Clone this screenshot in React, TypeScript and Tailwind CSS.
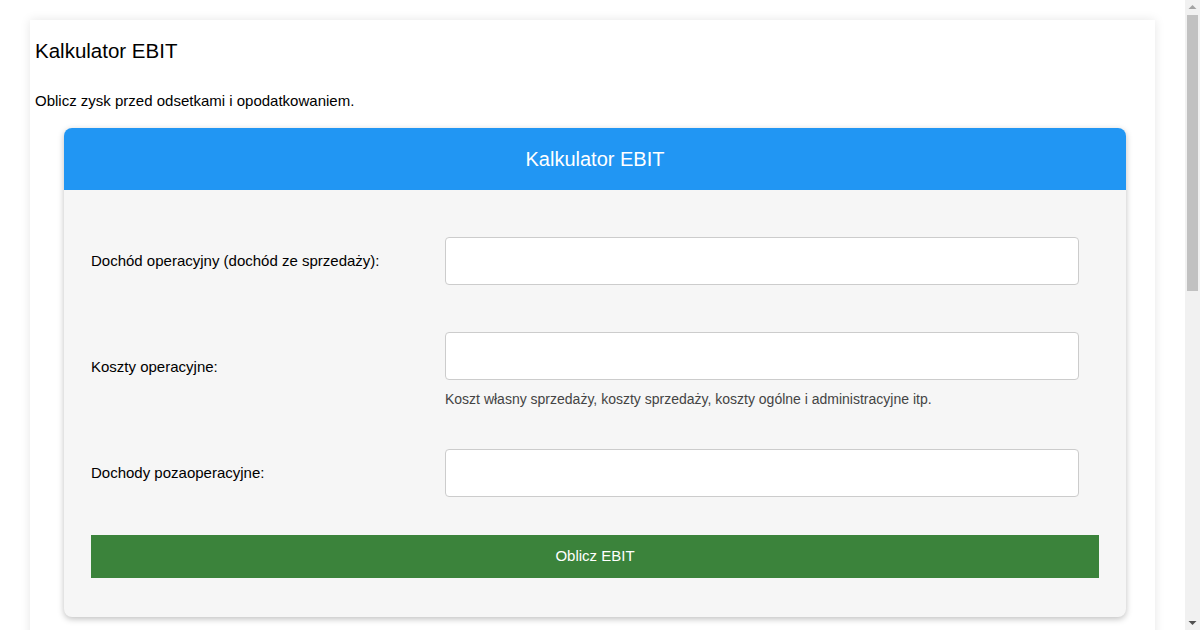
const FIELDS = [
  { label: "Dochód operacyjny (dochód ze sprzedaży):", hint: "" },
  {
    label: "Koszty operacyjne:",
    hint: "Koszt własny sprzedaży, koszty sprzedaży, koszty ogólne i administracyjne itp.",
  },
  { label: "Dochody pozaoperacyjne:", hint: "" },
];

function Scrollbar() {
  return (
    <div className="flex h-full w-[15px] shrink-0 flex-col items-center bg-[#f1f1f1]">
      <svg width="15" height="15" viewBox="0 0 15 15" className="shrink-0">
        <path d="M3.5 9 L7.5 5 L11.5 9 Z" fill="#a3a3a3" />
      </svg>
      <div className="h-[276px] w-[11px] bg-[#c1c1c1]" />
      <div className="flex-1" />
      <svg width="15" height="15" viewBox="0 0 15 15" className="shrink-0">
        <path d="M3.5 6 L7.5 10 L11.5 6 Z" fill="#505050" />
      </svg>
    </div>
  );
}

export default function App() {
  return (
    <div className="flex h-[630px] overflow-hidden bg-white font-['Liberation_Sans',Arial,sans-serif] text-black">
      <div className="h-full flex-1 overflow-hidden pt-[20px]">
        <div className="mx-[30px] min-h-[1330px] bg-white px-[5px] pt-[19px] shadow-[0_0_10px_rgba(0,0,0,0.1)]">
          <h2 className="text-[20.5px] leading-[24px]">Kalkulator EBIT</h2>
          <p className="mt-[29px] text-[15px] leading-[18px]">
            Oblicz zysk przed odsetkami i opodatkowaniem.
          </p>

          <div className="ml-[29px] mt-[18px] w-[1062px] overflow-hidden rounded-[8px] bg-[#f6f6f6] shadow-[0_2px_6px_rgba(0,0,0,0.25)]">
            <div className="flex h-[62px] items-center justify-center bg-[#2196f3] text-[20px] text-white">
              Kalkulator EBIT
            </div>

            <div className="px-[27px] pb-[39px] pt-[47px]">
              {FIELDS.map((f, i) => (
                <div
                  key={i}
                  className={`flex items-center ${i === 0 ? "mb-[47px]" : i === 1 ? "mb-[41px]" : "mb-[38px]"}`}
                >
                  <label
                    className={`w-[354px] text-[15px] leading-[18px] ${f.hint ? "mb-[6px]" : ""}`}
                  >
                    {f.label}
                  </label>
                  <div className="w-[634px]">
                    <input
                      type="text"
                      className="block h-[48px] w-full rounded-[4px] border border-[#cccccc] bg-white px-3 outline-none"
                    />
                    {f.hint && (
                      <p className="mt-[11px] text-[14px] leading-[17px] text-[#444]">{f.hint}</p>
                    )}
                  </div>
                </div>
              ))}

              <button className="block h-[43px] w-full bg-[#3b833b] text-[15px] text-white">
                Oblicz EBIT
              </button>
            </div>
          </div>
        </div>
      </div>
      <Scrollbar />
    </div>
  );
}
